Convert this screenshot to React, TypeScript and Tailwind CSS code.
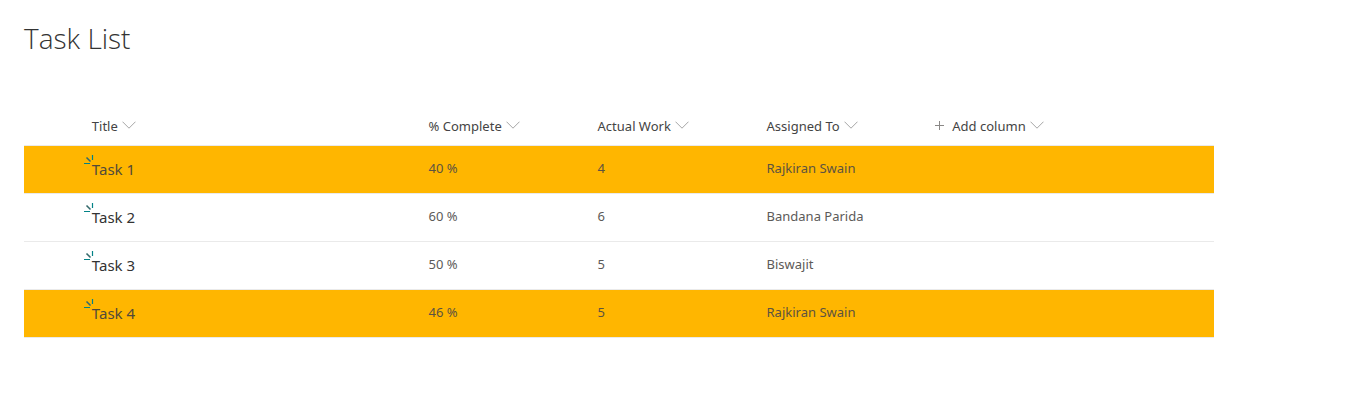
type Task = {
  title: string;
  complete: string;
  work: number;
  assignee: string;
  highlighted?: boolean;
};

const tasks: Task[] = [
  { title: "Task 1", complete: "40 %", work: 4, assignee: "Rajkiran Swain", highlighted: true },
  { title: "Task 2", complete: "60 %", work: 6, assignee: "Bandana Parida" },
  { title: "Task 3", complete: "50 %", work: 5, assignee: "Biswajit" },
  { title: "Task 4", complete: "46 %", work: 5, assignee: "Rajkiran Swain", highlighted: true },
];

const columns = ["Title", "% Complete", "Actual Work", "Assigned To"];

function Chevron() {
  return (
    <svg viewBox="0 0 14 8" className="mb-0.5 h-2 w-3.5 shrink-0" fill="none" stroke="#a6a6a6" aria-hidden="true">
      <path d="M0.5 0.7 L7 7.2 L13.5 0.7" />
    </svg>
  );
}

function Plus() {
  return (
    <svg viewBox="0 0 10 10" className="mr-1 size-2.5 shrink-0" stroke="#8a8886" aria-hidden="true">
      <path d="M5.5 0V9M1 4.5H10" />
    </svg>
  );
}

function NewMark() {
  return (
    <svg
      viewBox="0 0 10 10"
      className="absolute -top-1 -left-2 size-2.5"
      fill="none"
      stroke="#038387"
      role="img"
      aria-label="New item"
    >
      <path d="M8.5 0V5M0 8.5H6" strokeWidth="1.2" />
      <path d="M2.5 2.5L6.5 6.5" stroke="#35696b" strokeWidth="1.6" />
    </svg>
  );
}

export default function App() {
  return (
    <main className="px-6 pt-5 font-['Noto_Sans','Open_Sans',sans-serif] text-[13px] leading-5 text-[#444444]">
      <h1 className="font-['Open_Sans','Noto_Sans',sans-serif] text-[28px] leading-9 font-light text-[#333333]">
        Task List
      </h1>
      <table className="mt-[51px] w-full max-w-[1190px] table-fixed border-collapse text-left">
        <colgroup>
          <col className="w-[5.7%]" />
          <col className="w-[28.3%]" />
          <col className="w-[14.2%]" />
          <col className="w-[14.2%]" />
          <col className="w-[14.1%]" />
          <col />
        </colgroup>
        <thead>
          <tr className="h-[38px] border-b border-[#eaeaea]">
            <td />
            {columns.map((name) => (
              <th key={name} scope="col" className="p-0 font-normal">
                <button type="button" className="flex items-center gap-1 whitespace-nowrap">
                  {name}
                  <Chevron />
                </button>
              </th>
            ))}
            <th scope="col" className="p-0 font-normal">
              <button type="button" className="flex items-center gap-1 whitespace-nowrap">
                <Plus />
                Add column
                <Chevron />
              </button>
            </th>
          </tr>
        </thead>
        <tbody>
          {tasks.map((task) => (
            <tr
              key={task.title}
              className={
                task.highlighted
                  ? "h-12 border-b border-[#eaeaea] bg-[#ffb600] text-[#5c5340]"
                  : "h-12 border-b border-[#eaeaea] text-[#5c5a58]"
              }
            >
              <td />
              <td className="p-0">
                <a
                  href="#"
                  className={
                    task.highlighted
                      ? "relative block w-fit text-[15px] text-[#514a3b]"
                      : "relative block w-fit text-[15px] text-[#333333]"
                  }
                >
                  <NewMark />
                  {task.title}
                </a>
              </td>
              <td className="p-0 pb-0.5">{task.complete}</td>
              <td className="p-0 pb-0.5">{task.work}</td>
              <td className="p-0 pb-0.5">{task.assignee}</td>
              <td />
            </tr>
          ))}
        </tbody>
      </table>
    </main>
  );
}
